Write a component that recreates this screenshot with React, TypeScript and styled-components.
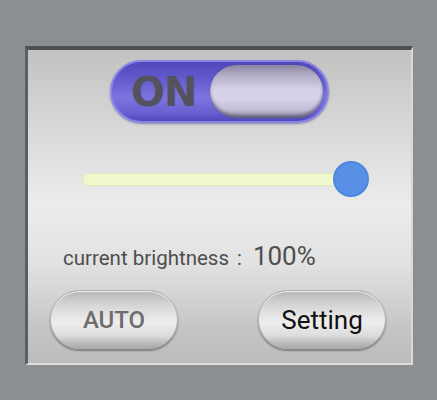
import styled, { createGlobalStyle } from "styled-components";

const GlobalStyle = createGlobalStyle`
    html, body {
        margin: 0;
        padding: 0;
        background: #8b8f91;
        font-family: Roboto, "Noto Sans", "Liberation Sans", sans-serif;
    }
`

const Page = styled.div`
    width: 437px;
    height: 400px;
    padding-top: 46px;
    padding-left: 25px;
    box-sizing: border-box;
`

const Panel = styled.div`
    width: 388px;
    height: 319px;
    box-sizing: border-box;
    border-top: 4px solid #4e5152;
    border-left: 3px solid #5c5f60;
    border-right: 2px solid #d8d8d8;
    border-bottom: 2px solid #dcdcdc;
    background: linear-gradient(180deg, #c2c2c2 0%, #dcdcdc 30%, #ececec 50%, #e2e2e2 68%, #c6c6c6 88%, #bcbcbc 100%);
    display: flex;
    flex-direction: column;
    align-items: center;
`

const Toggle = styled.div`
    margin-top: 10px;
    width: 219px;
    height: 63px;
    box-sizing: border-box;
    border-radius: 32px;
    border: 2px solid #8a84e4;
    background: linear-gradient(180deg, #4f47bb 0%, #6860d0 35%, #7c74de 60%, #6a62d2 85%, #5149bd 100%);
    box-shadow: 0 1px 2px rgba(60, 50, 120, 0.5);
    display: flex;
    align-items: center;
    justify-content: space-between;
    padding: 0 4px 0 19px;
`

const ToggleLabel = styled.span`
    font-family: "DejaVu Sans", sans-serif;
    font-weight: bold;
    font-size: 40px;
    letter-spacing: -1px;
    color: #55525f;
    line-height: 1;
`

const Knob = styled.div`
    width: 113px;
    height: 53px;
    border-radius: 27px;
    background: linear-gradient(180deg, #8b849f 0%, #b4aec8 20%, #d4d0e8 45%, #d6d2ea 65%, #c2bdd6 85%, #8e88a4 100%);
    box-shadow: inset 0 -3px 3px rgba(60, 55, 80, 0.5), 0 0 1px rgba(40, 30, 90, 0.6);
`

const SliderRow = styled.div`
    margin-top: 38px;
    width: 100%;
    box-sizing: border-box;
    padding-left: 55px;
    display: flex;
    align-items: center;
`

const Track = styled.div`
    width: 262px;
    height: 11px;
    border-radius: 6px;
    background: #eef8cc;
    box-shadow: 0 0 0 1px #e0ebbb;
`

const Thumb = styled.div`
    margin-left: -12px;
    width: 32px;
    height: 32px;
    border-radius: 50%;
    background: #5a8fe6;
    border: 2px solid #4d86e6;
    box-shadow: 0 0 1px #e8f0b0;
`

const Brightness = styled.div`
    margin-top: 44px;
    width: 100%;
    box-sizing: border-box;
    padding-left: 35px;
    display: flex;
    align-items: baseline;
    color: #4e4e4e;
`

const Caption = styled.span`
    font-size: 20.5px;
`

const Colon = styled.span`
    font-size: 20px;
    margin: 0 11px 0 8px;
`

const Value = styled.span`
    font-size: 26px;
`

const ButtonRow = styled.div`
    margin-top: 19px;
    width: 100%;
    box-sizing: border-box;
    padding: 0 25px 0 22px;
    display: flex;
    justify-content: space-between;
`

const PillButton = styled.div<{ $dim?: boolean }>`
    width: 128px;
    height: 59px;
    box-sizing: border-box;
    border-radius: 30px;
    border: 1px solid #b0b0b0;
    background: linear-gradient(180deg, #b4b4b4 0%, #d6d6d6 25%, #eeeeee 55%, #dcdcdc 78%, #a8a8a8 100%);
    box-shadow: 0 2px 2px rgba(70, 70, 70, 0.55), inset 0 1px 1px #f2f2f2;
    display: flex;
    align-items: center;
    justify-content: center;
    font-size: ${({ $dim }) => ($dim ? "24px" : "26px")};
    font-weight: ${({ $dim }) => ($dim ? 500 : 400)};
    color: ${({ $dim }) => ($dim ? "#6e6e6e" : "#111111")};
`

export default function App() {
    return (
        <>
            <GlobalStyle />
            <Page>
                <Panel>
                    <Toggle>
                        <ToggleLabel>ON</ToggleLabel>
                        <Knob />
                    </Toggle>
                    <SliderRow>
                        <Track />
                        <Thumb />
                    </SliderRow>
                    <Brightness>
                        <Caption>current brightness</Caption>
                        <Colon>:</Colon>
                        <Value>100%</Value>
                    </Brightness>
                    <ButtonRow>
                        <PillButton $dim>AUTO</PillButton>
                        <PillButton>Setting</PillButton>
                    </ButtonRow>
                </Panel>
            </Page>
        </>
    )
}
